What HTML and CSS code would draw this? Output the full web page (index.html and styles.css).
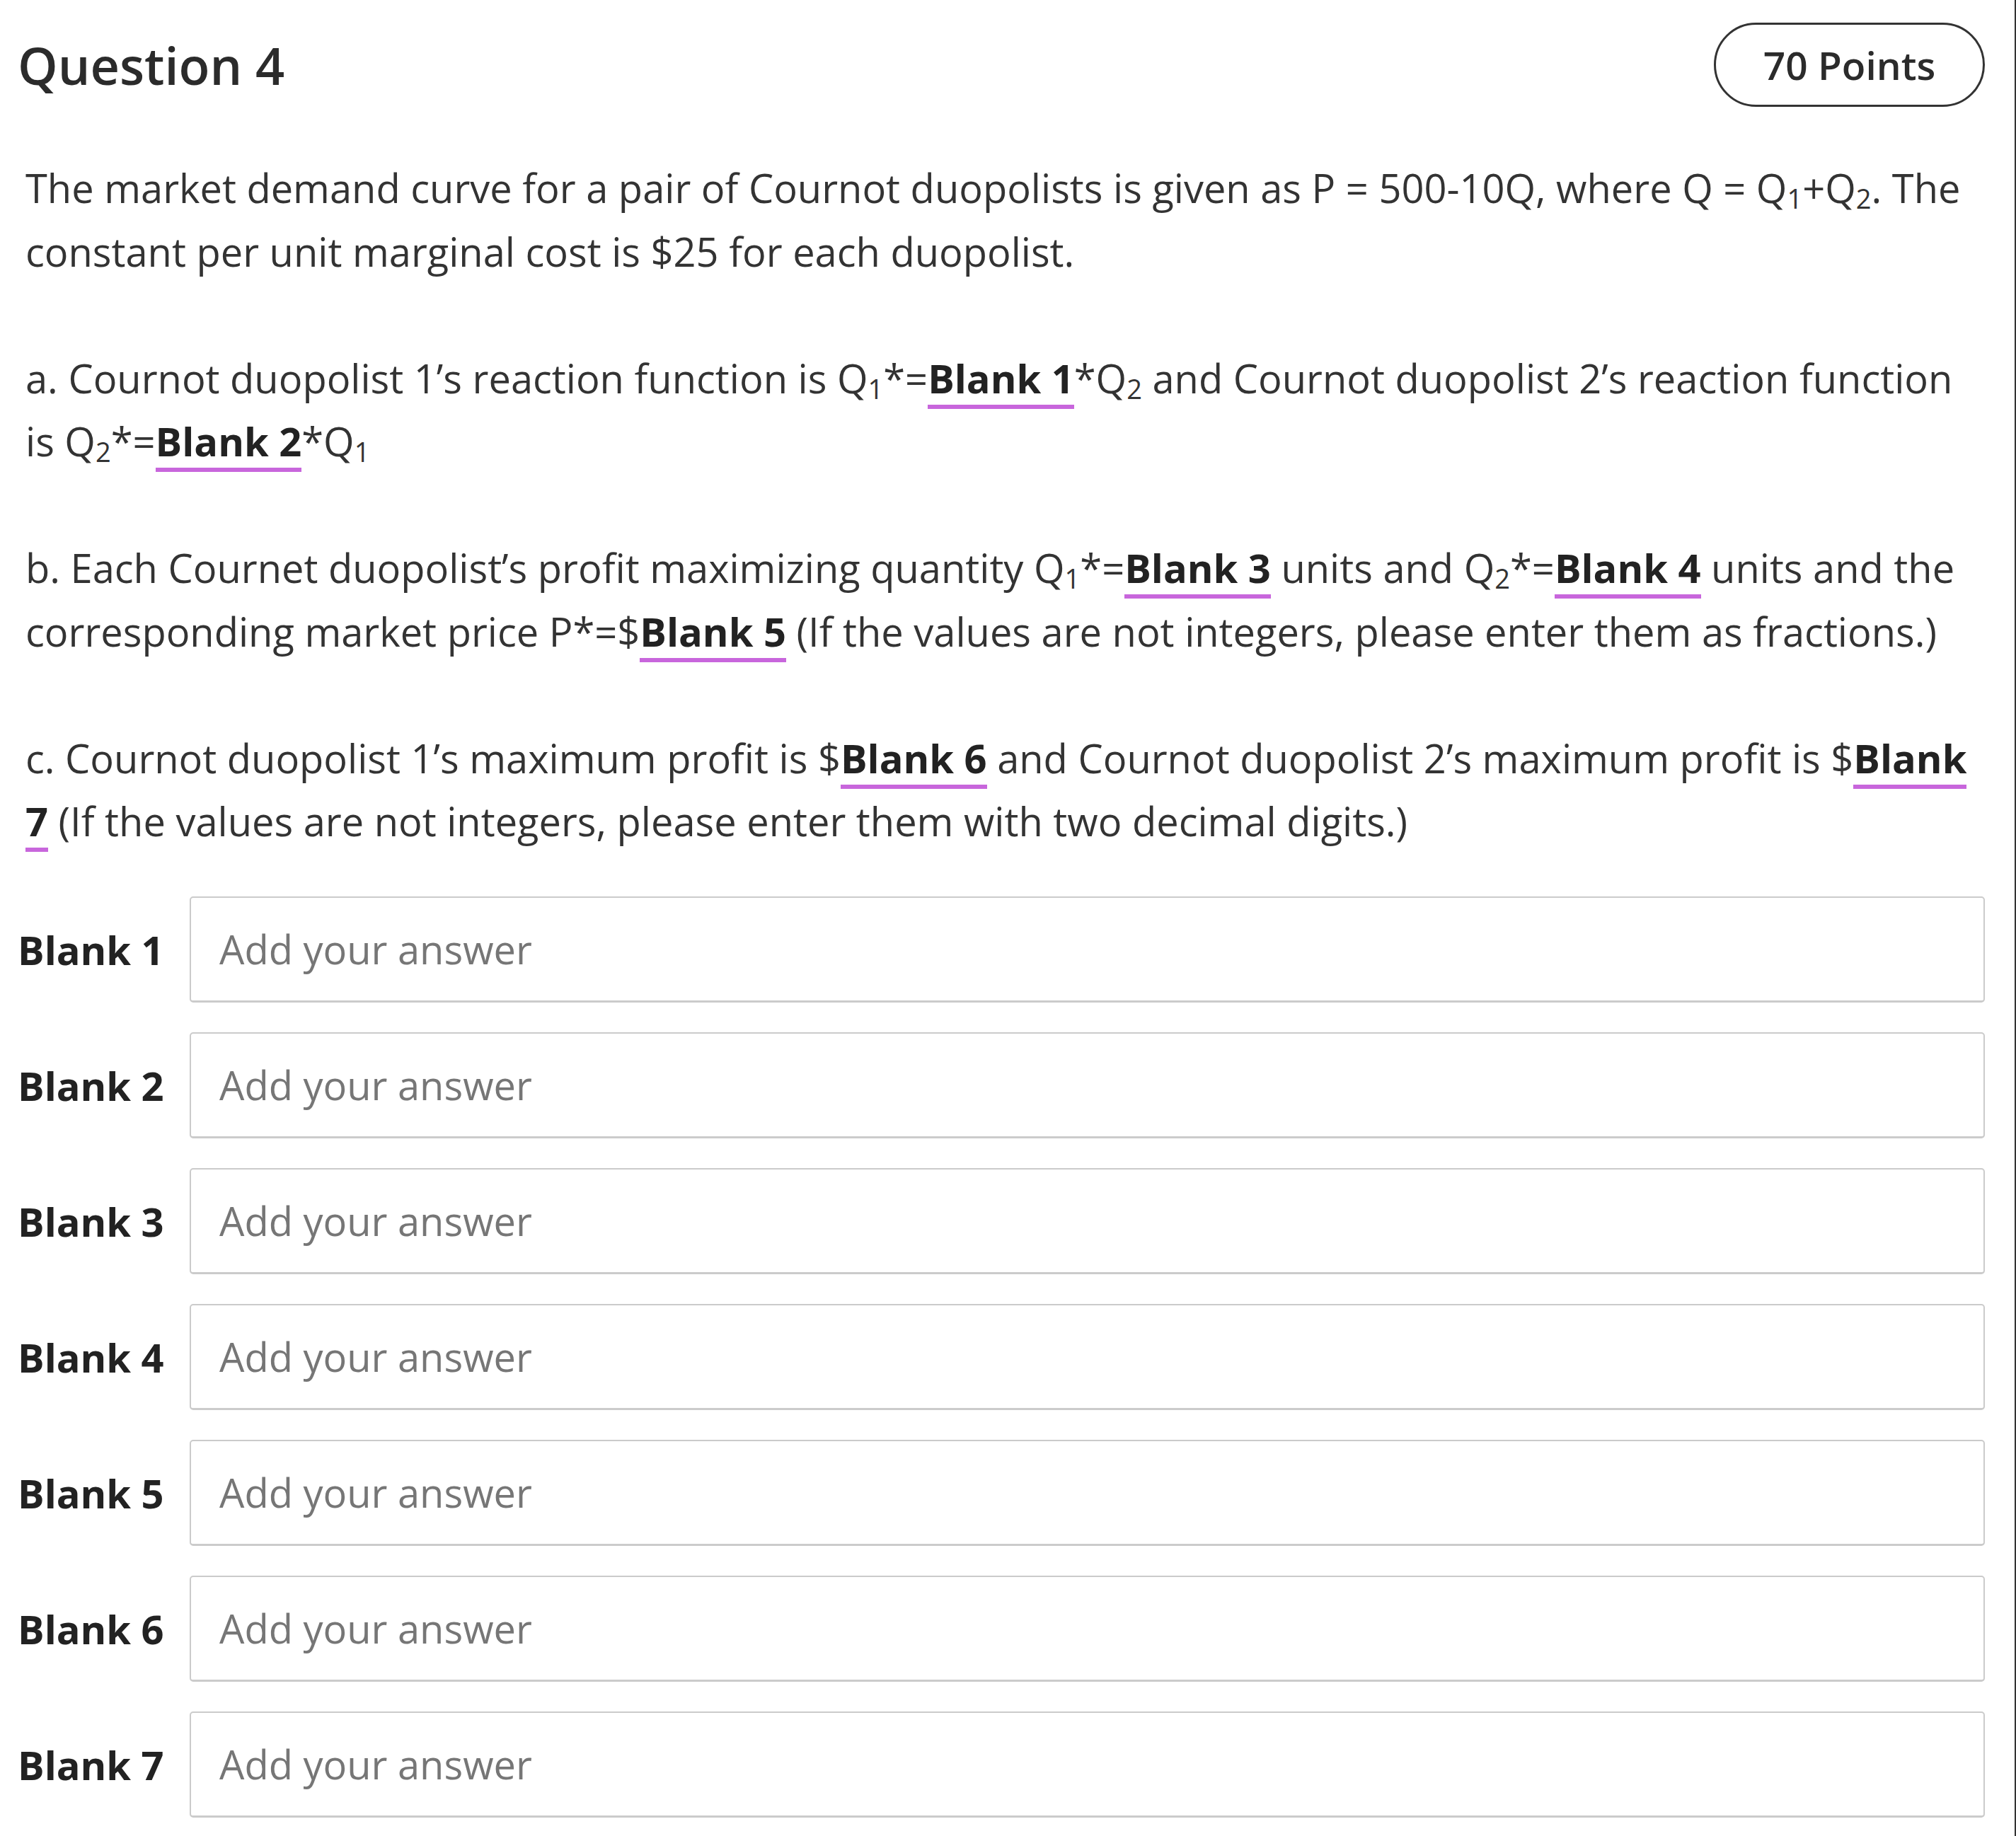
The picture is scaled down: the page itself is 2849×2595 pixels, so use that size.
FILE: index.html
```html
<!DOCTYPE html>
<html>
<head>
  <title>Question 4</title>
  <link rel="stylesheet" href="styles.css">
</head>
<body>

  <!-- Header -->
  <div class="q-head">
    <h1 class="q-title">Question 4</h1>
    <div class="q-points">70 Points</div>
  </div>

  <!-- Question text -->
  <div class="q-body">
    <p>The market demand curve for a pair of Cournot duopolists is given as P = 500-10Q, where Q = Q<sub>1</sub>+Q<sub>2</sub>. The constant per unit marginal cost is $25 for each duopolist.</p>
    <p>a. Cournot duopolist 1’s reaction function is Q<sub>1</sub>*=<b class="blank">Blank 1</b>*Q<sub>2</sub> and Cournot duopolist 2’s reaction function is Q<sub>2</sub>*=<b class="blank">Blank 2</b>*Q<sub>1</sub></p>
    <p>b. Each Cournet duopolist’s profit maximizing quantity Q<sub>1</sub>*=<b class="blank">Blank 3</b> units and Q<sub>2</sub>*=<b class="blank">Blank 4</b> units and the corresponding market price P*=$<b class="blank">Blank 5</b> (If the values are not integers, please enter them as fractions.)</p>
    <p>c. Cournot duopolist 1’s maximum profit is $<b class="blank">Blank 6</b> and Cournot duopolist 2’s maximum profit is $<b class="blank">Blank 7</b> (If the values are not integers, please enter them with two decimal digits.)</p>
  </div>

  <!-- Answers -->
  <div class="answers">
    <label class="answer-row"><span class="answer-label">Blank 1</span><input type="text" placeholder="Add your answer"></label>
    <label class="answer-row"><span class="answer-label">Blank 2</span><input type="text" placeholder="Add your answer"></label>
    <label class="answer-row"><span class="answer-label">Blank 3</span><input type="text" placeholder="Add your answer"></label>
    <label class="answer-row"><span class="answer-label">Blank 4</span><input type="text" placeholder="Add your answer"></label>
    <label class="answer-row"><span class="answer-label">Blank 5</span><input type="text" placeholder="Add your answer"></label>
    <label class="answer-row"><span class="answer-label">Blank 6</span><input type="text" placeholder="Add your answer"></label>
    <label class="answer-row"><span class="answer-label">Blank 7</span><input type="text" placeholder="Add your answer"></label>
  </div>

</body>
</html>
```

FILE: styles.css
```css
* { box-sizing: border-box; }

body {
  margin: 0; padding: 32px 42px 0 25px;
  min-height: 100vh;
  font-family: "Open Sans", "Noto Sans", sans-serif;
  font-size: 56px; color: #333;
  background: #fff;
  border-right: 2px solid #333;
}

/* header: title + points pill */
.q-head   { display: flex; justify-content: space-between; align-items: center; }
.q-title  { margin: 0; font-size: 72px; font-weight: 600; line-height: 98px; color: #2b2b2b; }
.q-points {
  width: 383px; height: 119px;
  display: flex; align-items: center; justify-content: center;
  border: 3px solid #333; border-radius: 60px;
  font-size: 55px; font-weight: 600; color: #2b2b2b;
}

/* question text */
.q-body   { margin-top: 70px; padding: 0 8px 0 11px; line-height: 89.5px; }
.q-body p { margin: 89.5px 0 0; }
.q-body p:first-child { margin-top: 0; }
sub       { font-size: 0.68em; vertical-align: -0.22em; line-height: 1; }
.blank    { font-weight: 700; color: #222; border-bottom: 6px solid #c866dc; }

/* answer rows */
.answers     { margin-top: 61px; display: flex; flex-direction: column; gap: 42px; }
.answer-row  { display: flex; align-items: center; }
.answer-label{ width: 243px; flex: none; font-weight: 700; color: #222; }
.answer-row input {
  flex: 1; height: 150px; margin: 0;
  padding: 0 40px;
  border: 2px solid #cbcbcb; border-bottom-width: 3px; border-radius: 5px;
  font: inherit; font-weight: 400; color: #333; background: #fff;
}
.answer-row input::placeholder { color: #767676; }
```
